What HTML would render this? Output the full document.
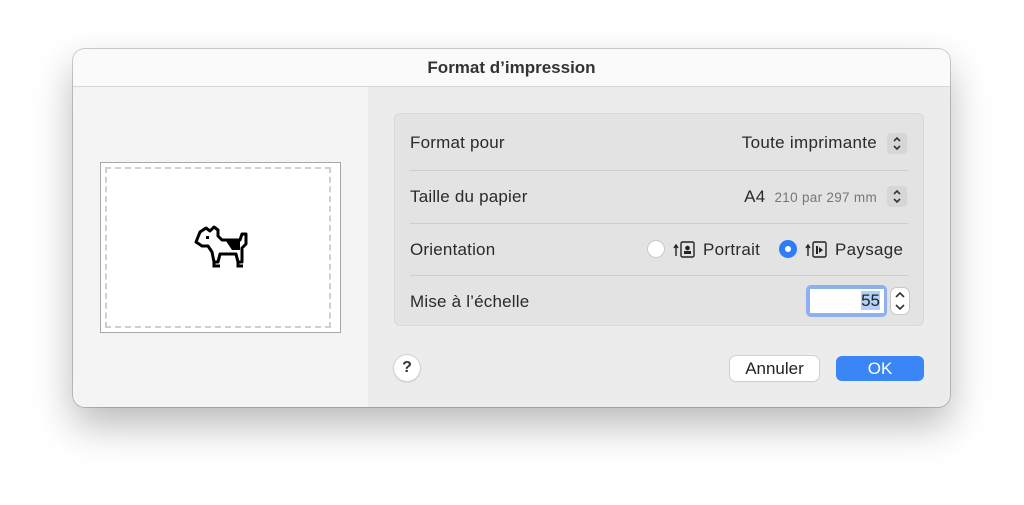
<!DOCTYPE html>
<html><head><meta charset="utf-8"><style>
*{box-sizing:border-box;margin:0;padding:0}
body{width:1024px;height:505px;background:#fff;font-family:"Liberation Sans","DejaVu Sans",sans-serif;position:relative;overflow:hidden;color:#222}
.win{position:absolute;left:73px;top:49px;width:877px;height:358px;border-radius:12px;background:#ececec;box-shadow:0 0 0 1px rgba(0,0,0,.18),0 18px 40px rgba(0,0,0,.28);overflow:hidden}
.title{position:absolute;left:0;top:0;width:100%;height:38px;background:#fafafa;border-bottom:1px solid #d6d6d6;text-align:center;font-weight:bold;font-size:17px;line-height:38px;color:#333}
.left{position:absolute;left:0;top:38px;width:295px;height:320px;background:#f4f4f4}
.paper{position:absolute;left:27px;top:75px;width:241px;height:171px;background:#fff;border:1px solid #a8a8a8}
.dash{position:absolute;left:4px;top:4px;right:9px;bottom:4px;border:2px dashed #cfcfcf}
.group{position:absolute;left:321px;top:64px;width:530px;height:213px;background:#e3e3e3;border:1px solid #d9d9d9;border-radius:6px}
.row{position:absolute;left:15px;right:15px;height:1px;background:#cdcdcd}
.lbl{position:absolute;left:15px;font-size:17px;color:#2a2a2a;letter-spacing:.2px}
.r{position:absolute;font-size:17px;color:#2a2a2a;letter-spacing:.3px}
.step{position:absolute;width:20px;height:21px;background:#d6d6d6;border-radius:4px}
.btn{position:absolute;top:307px;height:25px;border-radius:6px;font-size:17px;text-align:center;line-height:25px}
</style></head><body>
<div class="win">
<div class="title">Format d’impression</div>
<div class="left"><div class="paper"><div class="dash"></div>
<svg style="position:absolute;left:91px;top:59px" width="56" height="48" viewBox="0 0 56 48">
<path d="M8 10 L14 6 L18 9 L22 5 L26 8 L26 14 L30 18 L48 18 L50 12 L54 12 L54 22 L50 26 L50 40 L46 40 L44 32 L28 32 L26 40 L22 40 L20 30 L16 24 L10 24 L4 20 Z" fill="#fff" stroke="#000" stroke-width="3" stroke-linejoin="round"/>
<path d="M34 19 L48 19 L48 28 L40 28 Z" fill="#000"/><rect x="14" y="14" width="3" height="3" fill="#000"/>
<path d="M22 40 L22 44 L28 44 M46 40 L46 44 L51 44" stroke="#000" stroke-width="3" fill="none"/>
</svg></div></div>
<div class="group">
<div class="lbl" style="top:19px">Format pour</div>
<div class="r" style="right:46px;top:19px">Toute imprimante</div>
<div class="step" style="right:16px;top:19px"><svg width="20" height="21"><path d="M7 8l3-3 3 3M7 13l3 3 3-3" stroke="#333" stroke-width="1.6" fill="none"/></svg></div>
<div class="row" style="top:56px"></div>
<div class="lbl" style="top:73px">Taille du papier</div>
<div class="r" style="right:46px;top:73px">A4 <span style="font-size:13.5px;color:#777;margin-left:4px">210 par 297 mm</span></div>
<div class="step" style="right:16px;top:72px"><svg width="20" height="21"><path d="M7 8l3-3 3 3M7 13l3 3 3-3" stroke="#333" stroke-width="1.6" fill="none"/></svg></div>
<div class="row" style="top:109px"></div>
<div class="lbl" style="top:126px">Orientation</div>
<div style="position:absolute;left:252px;top:126px;width:18px;height:18px;border-radius:50%;background:#fff;border:1px solid #c8c8c8"></div>
<svg style="position:absolute;left:278px;top:126px" width="24" height="18"><path d="M3 16V6M1 8l2-3 2 3" stroke="#222" stroke-width="1.4" fill="none"/><rect x="8" y="2" width="13" height="15" rx="1.5" fill="none" stroke="#222" stroke-width="1.4"/><circle cx="14.5" cy="8" r="2.3" fill="#222"/><rect x="11" y="11" width="7" height="3" fill="#222"/></svg>
<div class="r" style="left:308px;top:126px">Portrait</div>
<div style="position:absolute;left:384px;top:126px;width:18px;height:18px;border-radius:50%;background:#2f7cf6;"><div style="position:absolute;left:6px;top:6px;width:6px;height:6px;border-radius:50%;background:#fff"></div></div>
<svg style="position:absolute;left:410px;top:126px" width="24" height="18"><path d="M3 16V6M1 8l2-3 2 3" stroke="#222" stroke-width="1.4" fill="none"/><rect x="8" y="2" width="13" height="15" rx="1.5" fill="none" stroke="#222" stroke-width="1.4"/><rect x="11" y="6" width="2" height="8" fill="#222"/><path d="M14 7l4 3-4 3z" fill="#222"/></svg>
<div class="r" style="left:440px;top:126px">Paysage</div>
<div class="row" style="top:161px"></div>
<div class="lbl" style="top:178px">Mise à l’échelle</div>
<div style="position:absolute;left:411px;top:171px;width:81px;height:32px;border-radius:5px;background:#8fb0ef"></div>
<div style="position:absolute;left:415px;top:175px;width:74px;height:24px;background:#fff;font-size:17px;text-align:right;line-height:24px;padding-right:4px"><span style="background:#b3d0fb">55</span></div>
<div style="position:absolute;left:496px;top:174px;width:18px;height:26px;background:#fff;border-radius:6px;box-shadow:0 0 0 1px #c8c8c8"><svg width="18" height="26"><path d="M5 9l4-4 4 4M5 17l4 4 4-4" stroke="#333" stroke-width="1.6" fill="none"/></svg></div>
</div>
<div style="position:absolute;left:321px;top:306px;width:26px;height:26px;border-radius:50%;background:#fff;box-shadow:0 0 0 1px #d0d0d0,0 1px 2px rgba(0,0,0,.2);text-align:center;line-height:26px;font-size:16px;font-weight:bold;color:#333">?</div>
<div class="btn" style="left:657px;width:89px;background:#fff;box-shadow:0 0 0 1px #d0d0d0,0 1px 1px rgba(0,0,0,.15);color:#222">Annuler</div>
<div class="btn" style="left:763px;width:88px;background:#3a86f7;color:#fff">OK</div>
</div>
</body></html>
